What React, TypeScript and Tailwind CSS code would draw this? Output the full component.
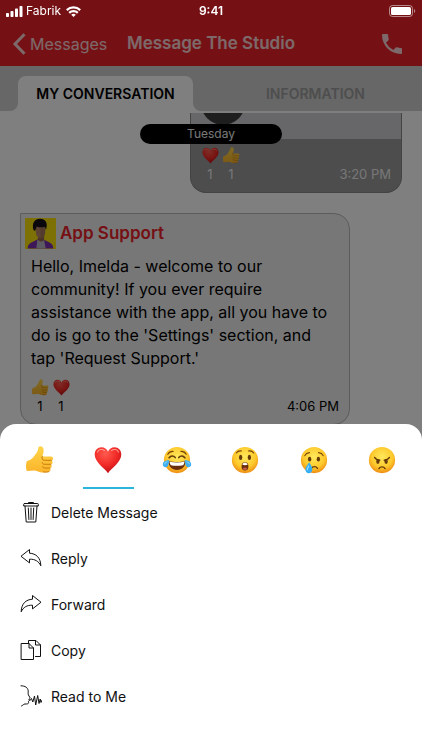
import React, { useState } from 'react';

interface IconProps {
  className?: string;
}

function ThumbsUp({ className = '' }: IconProps) {
  return (
    <svg viewBox="0 0 32 32" className={className} aria-hidden="true">
      <defs>
        <linearGradient id="thumb" x1="0" y1="0" x2="0" y2="1">
          <stop offset="0" stopColor="#ffd54a" />
          <stop offset="1" stopColor="#fab42a" />
        </linearGradient>
      </defs>
      <path
        d="M1 17c2.500-.8 5.500-1.500 7.500-4.500 2.300-3.400 5-6 5.400-9.500.2-2 1.300-2.800 2.900-2.600 2.900.4 3.900 3.500 3.200 6.600-.4 2-.9 3.400-1.200 5h9.700c3 0 3.300 4.100.7 4.600 1.800 1 1.500 4.100-.6 4.600 1.400 1.200 1 3.700-1 4.200 1 1.300.6 3.700-1.600 4.100-3.500.9-7.500.9-10.500.1-2.500-.7-4-1.700-6-1.600L1 28.500c-1.400-3-1.400-8 0-11.500z"
        fill="url(#thumb)"
      />
      <path
        d="M29 16.400h-8.200c-2.300-.2-2.900-2-2.200-4.500M28.300 20.900h-7.500c-1.300 0-2.200-.9-2.300-2M27.300 25.200h-6.100c-1.300 0-2.100-.8-2.200-1.900M26 29.400c-2 .6-4.300.5-6 .2"
        fill="none"
        stroke="#c97a0a"
        strokeWidth="1.100"
        strokeLinecap="round"
      />
    </svg>
  );
}

function Heart({ className = '' }: IconProps) {
  return (
    <svg viewBox="0 0 32 32" className={className} aria-hidden="true">
      <defs>
        <radialGradient id="heart" cx=".4" cy=".25" r=".8">
          <stop offset="0" stopColor="#ff5a4e" />
          <stop offset=".55" stopColor="#f12a26" />
          <stop offset="1" stopColor="#b90d16" />
        </radialGradient>
      </defs>
      <path
        d="M16 31C11.500 25 .8 18.500.8 9.800.8 5 4.200 1.500 8.500 1.500c3.400 0 6.200 2 7.500 5 1.300-3 4.100-5 7.500-5 4.300 0 7.700 3.500 7.700 8.300 0 8.700-10.700 15.200-15.200 21.200z"
        fill="url(#heart)"
      />
      <path d="M4 7C5 4 9 2.800 12 5.200M20 5.200c3-2.400 7-1.200 8 1.800" fill="none" stroke="#ff9c90" strokeWidth="1.200" strokeLinecap="round" />
    </svg>
  );
}

function Face({ className = '', children }: IconProps & { children: React.ReactNode }) {
  return (
    <svg viewBox="0 0 32 32" className={className} aria-hidden="true">
      <defs>
        <radialGradient id="face" cx=".5" cy=".38" r=".62">
          <stop offset="0" stopColor="#ffe95c" />
          <stop offset=".65" stopColor="#fdc92c" />
          <stop offset="1" stopColor="#ee8d12" />
        </radialGradient>
      </defs>
      <circle cx="16" cy="16" r="15" fill="url(#face)" />
      {children}
    </svg>
  );
}

function Joy({ className }: IconProps) {
  return (
    <Face className={className}>
      <path d="M5.500 9.500C7 7 9 6 11.500 6.200M26.500 9.500C25 7 23 6 20.500 6.200" fill="none" stroke="#7a4406" strokeWidth="1.300" strokeLinecap="round" />
      <path d="M7 13.500c2-2.800 5-2.800 7-.3M25 13.500c-2-2.800-5-2.800-7-.3" fill="none" stroke="#653b0a" strokeWidth="1.800" strokeLinecap="round" />
      <path d="M6.500 17.500c5.500 1.200 13.500 1.200 19 0 .5 5.500-3.500 10-9.500 10s-10-4.500-9.500-10z" fill="#6a2e0d" />
      <path d="M7.500 18c5 1 12 1 17 0-.2 2.200-1 3.500-1.500 4-4 .8-10 .8-14 0-.8-.8-1.400-2.300-1.500-4z" fill="#fff" />
      <path d="M7.500 16.500C3.500 16-.5 18-.2 21.500c.2 3 3.900 3.700 5.600 1.500 1.300-1.700 1-4.500 2.100-6.500zM24.500 16.500c4-.5 8 1.500 7.700 5-.2 3-3.900 3.700-5.600 1.500-1.300-1.700-1-4.500-2.100-6.500z" fill="#3daef0" />
      <path d="M2 20.500c0-1.200 1-2 2.500-2.400M30 20.500c0-1.200-1-2-2.500-2.400" fill="none" stroke="#a5e3ff" strokeWidth="1" strokeLinecap="round" />
    </Face>
  );
}

function Astonished({ className }: IconProps) {
  return (
    <Face className={className}>
      <path d="M6 8c1.500-2 3.500-2.700 6-2.300M26 8c-1.500-2-3.500-2.700-6-2.300" fill="none" stroke="#7a4406" strokeWidth="1.300" strokeLinecap="round" />
      <ellipse cx="11" cy="13" rx="1.900" ry="2.900" fill="#653b0a" />
      <ellipse cx="21" cy="13" rx="1.900" ry="2.900" fill="#653b0a" />
      <ellipse cx="16" cy="23.300" rx="3.900" ry="4.600" fill="#6a2e0d" />
      <path d="M13 21.500c.6-3 5.400-3 6 0-1.500.7-4.500.7-6 0z" fill="#fff" />
      <ellipse cx="16" cy="26" rx="2.400" ry="1.400" fill="#c25b45" />
    </Face>
  );
}

function Crying({ className }: IconProps) {
  return (
    <Face className={className}>
      <path d="M5.500 11c1-2.200 2.700-3.200 5.300-3.500M26.500 11c-1-2.200-2.700-3.200-5.300-3.500" fill="none" stroke="#7a4406" strokeWidth="1.300" strokeLinecap="round" />
      <ellipse cx="11" cy="15" rx="1.900" ry="2.700" fill="#653b0a" />
      <ellipse cx="21" cy="15" rx="1.900" ry="2.700" fill="#653b0a" />
      <path d="M13 25.500c1.500-2.700 5.500-2.700 7 0" fill="none" stroke="#653b0a" strokeWidth="1.500" strokeLinecap="round" />
      <path d="M10.500 18.500c2 3.500 3.500 5.500 3.500 8.300 0 2.700-1.700 4.200-3.900 4.200s-3.900-1.500-3.900-4.200c0-2.800 2.300-4.800 4.300-8.300z" fill="#35aef2" />
      <path d="M8.300 27c0-1.600 1-2.800 1.700-4" fill="none" stroke="#a5e3ff" strokeWidth="1.200" strokeLinecap="round" />
    </Face>
  );
}

function Angry({ className }: IconProps) {
  return (
    <Face className={className}>
      <ellipse cx="11.300" cy="17.800" rx="1.900" ry="2.700" fill="#653b0a" />
      <ellipse cx="20.700" cy="17.800" rx="1.900" ry="2.700" fill="#653b0a" />
      <path d="M7.500 13c1.200 2.200 3 3.200 6 3.300M24.500 13c-1.200 2.200-3 3.200-6 3.300" fill="none" stroke="#653b0a" strokeWidth="1.500" strokeLinecap="round" />
      <path d="M12.500 25.800c1.500-2.600 5.500-2.600 7 0" fill="none" stroke="#653b0a" strokeWidth="1.600" strokeLinecap="round" />
    </Face>
  );
}

function Avatar({ className = '' }: IconProps) {
  return (
    <svg viewBox="0 0 30 30" className={className} role="img" aria-label="App Support avatar">
      <rect width="30" height="30" fill="#fbe30c" />
      <path d="M2.500 29.500c.2-3 1.500-4.700 3.700-5.700l6.300-3.300h5l6.300 3.300c2.200 1 3.500 2.700 3.700 5.700z" fill="#7a2fae" />
      <path d="M12 21h6.500l1.500 8.500h-9z" fill="#b9b4c4" />
      <path d="M12.500 16h6v5c-1 2.300-4.500 2.300-6 0z" fill="#96694f" />
      <path d="M10.500 7c0-3 9-3 9 0v6.500c0 3.500-2.200 6-4.500 6s-4.500-2.500-4.500-6z" fill="#b98469" />
      <path d="M15 4h4.500v9.500c0 3.500-2.200 6-4.500 6z" fill="#96694f" fillOpacity=".5" />
      <path d="M8.200 11.500C6.300 5 9.500.8 14.500.8c5.500 0 8 4 5.800 10.700l-1-3c-3 1-5.800.5-8-.3l-1.500 4.500z" fill="#15101a" />
    </svg>
  );
}

function SignalBars() {
  return (
    <svg viewBox="0 0 17 11" className="h-[11px] w-[17px]" fill="currentColor" aria-hidden="true">
      <rect x="0" y="7" width="3" height="4" rx=".8" />
      <rect x="4.500" y="5" width="3" height="6" rx=".8" />
      <rect x="9" y="2.500" width="3" height="8.500" rx=".8" />
      <rect x="13.500" y="0" width="3" height="11" rx=".8" />
    </svg>
  );
}

function Wifi() {
  return (
    <svg viewBox="0 0 15 11" className="h-[11px] w-[15px]" aria-hidden="true">
      <path d="M.8 4.100a9.600 9.600 0 0 1 13.400 0M3.200 6.900a6.100 6.100 0 0 1 8.600 0" fill="none" stroke="currentColor" strokeWidth="2.200" />
      <path d="M7.500 11 5.200 8.700a3.400 3.400 0 0 1 4.600 0z" fill="currentColor" />
    </svg>
  );
}

function Battery() {
  return (
    <svg viewBox="0 0 27 12" className="h-3 w-[27px]" aria-hidden="true">
      <rect x=".5" y=".5" width="23" height="11" rx="3" fill="none" stroke="currentColor" strokeOpacity=".5" />
      <rect x="2" y="2" width="20" height="8" rx="1.600" fill="currentColor" />
      <path d="M25 4v4c1.600-.6 1.600-3.400 0-4z" fill="currentColor" fillOpacity=".5" />
    </svg>
  );
}

const stroke = {
  fill: 'none',
  stroke: 'currentColor',
  strokeWidth: 1,
  strokeLinejoin: 'round' as const,
  strokeLinecap: 'round' as const,
  'aria-hidden': true
};

function TrashIcon() {
  return (
    <svg viewBox="0 0 22 22" className="size-[22px]" {...stroke}>
      <path d="M8.500 2.500v-1h5v1M4.500 2.500h13a.8.800 0 0 1 .8.800v1.700H3.700V3.300a.8.800 0 0 1 .8-.8zM5 5l1.200 16h9.600L17 5M8.300 7l.6 11.500M11 7v11.500M13.700 7l-.6 11.500" />
    </svg>
  );
}

function ReplyIcon() {
  return (
    <svg viewBox="0 0 22 22" className="size-[22px]" {...stroke}>
      <path d="M1.300 9 9.500 2.500v3.700c6.500.3 11.200 4.500 11.300 12.600-2-4.500-5.800-6.800-11.300-6.600v3.300z" />
    </svg>
  );
}

function ForwardIcon() {
  return (
    <svg viewBox="0 0 22 22" className="size-[22px]" {...stroke}>
      <path d="M20.700 9 12.500 2.500v3.700C6 6.500 1.300 10.700 1.200 18.800c2-4.500 5.800-6.800 11.300-6.600v3.300z" />
    </svg>
  );
}

function CopyIcon() {
  return (
    <svg viewBox="0 0 22 22" className="size-[22px]" {...stroke}>
      <path d="M1.500 4.500h7.500l4.500 4.500v11.500h-12zM9 4.500V9h4.500" />
      <path d="M8.500 4.500v-3H16l4.500 4.500v11.500h-5M15.500 1.500V6h5" />
    </svg>
  );
}

function SpeakIcon() {
  return (
    <svg viewBox="0 0 22 22" className="size-[22px]" {...stroke}>
      <path d="M1 .8c4.300 0 6.700 1.700 7.200 5 .2 1.700-.4 2.500.2 4.100l1.700 3c.2.700-.7.900-1.200 1.100l.5 1.500-1 .9.300 1c-.2 1.700-1.700 1.600-3.700 1.600-1.500 0-1.800 1.300-3.500 2" />
      <path d="M10 15.500l1.500-2 1.300 3.500 1.700-6 1.200 9 2-9.500 1.300 8 1.200-4.500.8 3.500.8-2" />
    </svg>
  );
}

const reactions = [
  { id: 'like', label: 'Like', Icon: ThumbsUp },
  { id: 'love', label: 'Love', Icon: Heart },
  { id: 'joy', label: 'Laugh', Icon: Joy },
  { id: 'wow', label: 'Wow', Icon: Astonished },
  { id: 'sad', label: 'Sad', Icon: Crying },
  { id: 'angry', label: 'Angry', Icon: Angry }
];

const actions = [
  { label: 'Delete Message', Icon: TrashIcon },
  { label: 'Reply', Icon: ReplyIcon },
  { label: 'Forward', Icon: ForwardIcon },
  { label: 'Copy', Icon: CopyIcon },
  { label: 'Read to Me', Icon: SpeakIcon }
];

function StatusBar() {
  return (
    <div className="relative z-20 grid h-[22px] grid-cols-3 items-center px-1.5 text-[12px] text-white">
      <div className="flex items-center gap-[3px]">
        <SignalBars />
        <span className="mr-0.5">Fabrik</span>
        <Wifi />
      </div>
      <span className="text-center text-[12px] font-semibold">9:41</span>
      <div className="flex justify-end">
        <Battery />
      </div>
    </div>
  );
}

function NavBar() {
  return (
    <nav className="grid h-11 grid-cols-[1fr_auto_1fr] items-center px-3 text-white/80">
      <button className="flex items-center gap-1 text-[16px]">
        <svg viewBox="0 0 14 22" className="h-[22px] w-3.5" fill="none" stroke="currentColor" strokeWidth="3" aria-hidden="true">
          <path d="M12.500 1.200 3 11l9.500 9.800" />
        </svg>
        Messages
      </button>
      <h1 className="text-[17px] font-semibold">Message The Studio</h1>
      <button aria-label="Call" className="justify-self-end pr-2">
        <svg viewBox="0 0 20 20" className="size-5" fill="currentColor" aria-hidden="true">
          <path d="M4 8.700a16.800 16.800 0 0 0 7.300 7.300l2.500-2.500c.3-.3.700-.4 1.100-.2 1.300.4 2.600.6 4 .6.600 0 1.100.5 1.100 1.100v3.900c0 .6-.5 1.100-1.100 1.100A18.900 18.900 0 0 1 0 1.100C0 .5.500 0 1.100 0H5c.6 0 1.100.5 1.100 1.100 0 1.400.2 2.700.6 4 .1.400 0 .8-.2 1.100z" />
        </svg>
      </button>
    </nav>
  );
}

function Tabs() {
  return (
    <div className="bg-white pb-0.5 text-[14px] font-semibold">
      <div className="h-2.5 bg-[#cecece]" />
      <div className="flex h-[35px]">
        <div className="w-[18px] rounded-br-lg bg-[#cecece]" />
        <div className="bg-[#cecece]">
          <button className="h-full w-[175px] rounded-t-lg bg-white text-black">MY CONVERSATION</button>
        </div>
        <button className="flex-1 rounded-bl-lg bg-[#cecece] pl-4 text-[#9c9c9c]">INFORMATION</button>
      </div>
    </div>
  );
}

function ReactionCounts({ first, second }: { first: React.ReactNode; second: React.ReactNode }) {
  return (
    <div className="flex gap-[3px] text-[13px] leading-5">
      <div className="flex w-[18px] flex-col items-center">{first}1</div>
      <div className="flex w-[18px] flex-col items-center">{second}1</div>
    </div>
  );
}

function ActionSheet() {
  const [selected, setSelected] = useState('love');

  return (
    <section aria-label="Message actions" className="fixed inset-x-0 bottom-0 z-20 rounded-t-2xl bg-white pb-[31px]">
      <div className="flex justify-between px-[14px] pt-[22px]">
        {reactions.map(({ id, label, Icon }) => (
          <button
            key={id}
            aria-label={label}
            onClick={() => setSelected(id)}
            className={`flex h-[43px] w-[51px] justify-center border-b-2 ${selected === id ? 'border-[#2bb4dc]' : 'border-transparent'}`}
          >
            <Icon className="size-[28px] overflow-visible" />
          </button>
        ))}
      </div>
      <ul>
        {actions.map(({ label, Icon }) => (
          <li key={label}>
            <button className="flex h-[46px] w-full items-center gap-[9px] px-5 text-[14px] text-[#111]">
              <Icon />
              {label}
            </button>
          </li>
        ))}
      </ul>
    </section>
  );
}

export default function App() {
  return (
    <div className="flex h-screen flex-col overflow-hidden bg-white font-['Inter',sans-serif]">
      <header className="bg-[#ea222a]">
        <StatusBar />
        <NavBar />
      </header>
      <Tabs />

      <main className="relative flex-1 overflow-hidden">
        <span className="absolute top-[11px] left-1/2 z-10 w-[142px] -translate-x-1/2 rounded-full bg-black text-center text-[12px] leading-5 text-[#eee]">
          Tuesday
        </span>

        <div className="mr-5 ml-auto w-[212px] overflow-hidden rounded-b-2xl border border-t-0 border-[#888] bg-[#9a9a9a] text-[#eee]">
          <div className="h-[26px] overflow-hidden bg-[#cfcfd3] pl-[10px]">
            <div className="-mt-8 size-11 rounded-full bg-[#3c3c3c]" />
          </div>
          <div className="flex items-end justify-between px-[10px] pt-2 pb-2">
            <ReactionCounts first={<Heart className="size-[17px]" />} second={<ThumbsUp className="size-[17px]" />} />
            <time className="text-[13px] leading-5">3:20 PM</time>
          </div>
        </div>

        <article className="mt-5 ml-5 w-[330px] rounded-2xl rounded-tl-none border border-[#b8b8bc] bg-[#eee] pb-2 text-black">
          <div className="flex items-center gap-1 px-1 pt-1">
            <Avatar className="size-[31px]" />
            <h2 className="text-[17px] font-semibold text-[#ea222a]">App Support</h2>
          </div>
          <p className="px-[10px] pt-[6px] text-[16px] leading-[23px]">
            Hello, Imelda - welcome to our community! If you ever require assistance with the app, all you have to do
            is go to the 'Settings' section, and tap 'Request Support.'
          </p>
          <div className="flex items-end justify-between px-[10px] pt-[9px]">
            <ReactionCounts first={<ThumbsUp className="size-[17px]" />} second={<Heart className="size-[17px]" />} />
            <time className="text-[13px] leading-5">4:06 PM</time>
          </div>
        </article>
      </main>

      <div className="fixed inset-0 z-10 bg-black/50" />
      <ActionSheet />
    </div>
  );
}
